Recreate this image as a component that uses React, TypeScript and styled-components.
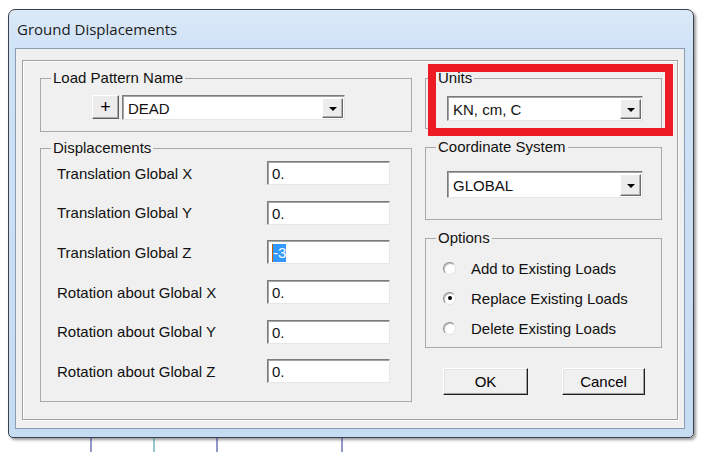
import React from 'react'
import styled, { createGlobalStyle } from 'styled-components'

const GlobalStyle = createGlobalStyle`
  html, body {
    margin: 0;
    padding: 0;
    background: #fff;
  }
  body {
    font-family: "Liberation Sans", Arial, sans-serif;
    font-size: 15px;
    color: #111;
  }
`

const Stage = styled.div`
  width: 706px;
  height: 452px;
  overflow: hidden;
`

const Window = styled.div`
  margin: 9px 0 0 8px;
  width: 686px;
  height: 429px;
  box-sizing: border-box;
  border: 1px solid #3a414c;
  border-radius: 7px 7px 5px 5px;
  background: linear-gradient(180deg, #dbe9f8 0%, #cfe2f6 40px, #c6dcf3 100%);
  box-shadow: 2px 2px 3px rgba(0, 0, 0, 0.4);
  display: flex;
  flex-direction: column;
  padding: 0 8px 8px 6px;
`

const TitleBar = styled.div`
  height: 38px;
  display: flex;
  align-items: center;
  padding-left: 2px;
  padding-bottom: 1px;
  box-sizing: border-box;
`

const Title = styled.span`
  font-family: "Open Sans", "Noto Sans", sans-serif;
  font-size: 15px;
  color: #1b1b1b;
`

const Client = styled.div`
  flex: 1;
  display: flex;
  border: 1px solid #8b9cb1;
  background: #f0f0f0;
  padding: 11px 6px 8px 6px;
`

const Panel = styled.div`
  flex: 1;
  display: flex;
  gap: 13px;
  border: 1px solid #a0a0a0;
  box-shadow: inset 1px 1px #fff, 1px 1px #fff;
  padding: 9px 15px 17px 17px;
`

const Column = styled.div<{ $width: number; $gap: number }>`
  width: ${p => p.$width}px;
  display: flex;
  flex-direction: column;
  gap: ${p => p.$gap}px;
`

const Group = styled.fieldset<{ $pad: string; $grow?: boolean }>`
  margin: 0;
  min-width: 0;
  border: 1px solid #a9a9a9;
  padding: ${p => p.$pad};
  ${p => (p.$grow ? 'flex: 1;' : '')}
`

const Legend = styled.legend`
  padding: 0 2px;
  font-size: 15px;
  line-height: 16px;
`

const PatternRow = styled.div`
  display: flex;
  align-items: flex-start;
  gap: 3px;
  padding-left: 41px;
`

const RaisedButton = styled.button`
  width: 27px;
  height: 24px;
  padding: 0;
  background: #ececec;
  border: 1px solid;
  border-color: #fff #5f5f5f #5f5f5f #fff;
  box-shadow: inset -1px -1px #a8a8a8;
  font-family: "Liberation Sans", Arial, sans-serif;
  font-size: 18px;
  line-height: 18px;
  color: #000;
`

const Combo = styled.div<{ $width: number; $height: number; $indent?: number }>`
  width: ${p => p.$width}px;
  height: ${p => p.$height}px;
  margin-left: ${p => p.$indent ?? 0}px;
  box-sizing: border-box;
  display: flex;
  align-items: stretch;
  background: #fff;
  border: 1px solid;
  border-color: #7c7c7c #e6e6e6 #e6e6e6 #7c7c7c;
  box-shadow: inset 1px 1px #a3a3a3;
  padding: 2px 1px 1px 5px;
`

const ComboText = styled.span`
  flex: 1;
  display: flex;
  align-items: center;
  font-size: 15px;
`

const DropButton = styled.span`
  width: 21px;
  box-sizing: border-box;
  display: flex;
  align-items: center;
  justify-content: center;
  background: #ececec;
  border: 1px solid;
  border-color: #fff #6a6a6a #6a6a6a #fff;
  box-shadow: inset -1px -1px #b0b0b0;
`

const Arrow = styled.span`
  width: 0;
  height: 0;
  border-left: 4px solid transparent;
  border-right: 4px solid transparent;
  border-top: 4px solid #000;
  margin-top: 1px;
`

const FieldGrid = styled.div`
  display: grid;
  grid-template-columns: 216px 123px;
  grid-auto-rows: 24px;
  row-gap: 15.7px;
  align-items: center;
`

const FieldLabel = styled.span`
  padding-left: 6px;
  font-size: 15px;
  white-space: nowrap;
`

const EditField = styled.div`
  height: 24px;
  box-sizing: border-box;
  display: flex;
  align-items: center;
  background: #fff;
  border: 1px solid;
  border-color: #7c7c7c #e6e6e6 #e6e6e6 #7c7c7c;
  box-shadow: inset 1px 1px #a3a3a3;
  padding: 1px 0 0 4px;
  font-size: 15px;
`

const Selected = styled.span`
  background: #3399ff;
  color: #fff;
  line-height: 18px;
  border-left: 1px solid #c06000;
`

const HighlightWrap = styled.div`
  position: relative;
`

const Highlight = styled.div`
  position: absolute;
  left: 3px;
  top: -6px;
  width: 245px;
  height: 72px;
  box-sizing: border-box;
  border: 8px solid #ed1c24;
  pointer-events: none;
`

const RadioList = styled.div`
  display: flex;
  flex-direction: column;
  gap: 10px;
`

const RadioRow = styled.label`
  display: flex;
  align-items: center;
  height: 20px;
  gap: 15px;
  padding-left: 7px;
  font-size: 15px;
`

const RadioDot = styled.span<{ $checked?: boolean }>`
  width: 13px;
  height: 13px;
  box-sizing: border-box;
  border-radius: 50%;
  border: 1px solid;
  border-color: #8c8c8c #e4e4e4 #e4e4e4 #8c8c8c;
  background: #fff;
  box-shadow: inset 1px 1px #c4c4c4;
  display: flex;
  align-items: center;
  justify-content: center;
  &::after {
    content: '';
    width: 4px;
    height: 4px;
    border-radius: 50%;
    background: ${p => (p.$checked ? '#000' : 'transparent')};
  }
`

const ButtonRow = styled.div`
  display: flex;
  gap: 34px;
  padding-left: 18px;
  margin-top: 10px;
`

const DialogButton = styled.button<{ $width: number }>`
  width: ${p => p.$width}px;
  height: 27px;
  padding: 0;
  background: #f0f0f0;
  border: 1px solid;
  border-color: #fff #1e1e1e #1e1e1e #fff;
  box-shadow: inset -1px -1px #a0a0a0, inset 1px 1px #e3e3e3;
  font-family: "Liberation Sans", Arial, sans-serif;
  font-size: 15px;
  color: #000;
`

const Backdrop = styled.svg`
  display: block;
`

const displacements = [
  { label: 'Translation Global X', value: '0.' },
  { label: 'Translation Global Y', value: '0.' },
  { label: 'Translation Global Z', value: '-3', selected: true },
  { label: 'Rotation about Global X', value: '0.' },
  { label: 'Rotation about Global Y', value: '0.' },
  { label: 'Rotation about Global Z', value: '0.' },
]

const options = [
  { label: 'Add to Existing Loads' },
  { label: 'Replace Existing Loads', checked: true },
  { label: 'Delete Existing Loads' },
]

const ComboBox = ({ text, width, height, indent }: { text: string; width: number; height: number; indent?: number }) => (
  <Combo $width={width} $height={height} $indent={indent}>
    <ComboText>{text}</ComboText>
    <DropButton><Arrow /></DropButton>
  </Combo>
)

export default function App() {
  return (
    <>
      <GlobalStyle />
      <Stage>
        <Window>
          <TitleBar>
            <Title>Ground Displacements</Title>
          </TitleBar>
          <Client>
            <Panel>
              <Column $width={372} $gap={8}>
                <Group $pad="9px 10px 11px">
                  <Legend>Load Pattern Name</Legend>
                  <PatternRow>
                    <RaisedButton>+</RaisedButton>
                    <ComboBox text="DEAD" width={223} height={25} />
                  </PatternRow>
                </Group>
                <Group $pad="5px 10px 0" $grow>
                  <Legend>Displacements</Legend>
                  <FieldGrid>
                    {displacements.map(d => (
                      <React.Fragment key={d.label}>
                        <FieldLabel>{d.label}</FieldLabel>
                        <EditField>
                          {d.selected ? <Selected>{d.value}</Selected> : d.value}
                        </EditField>
                      </React.Fragment>
                    ))}
                  </FieldGrid>
                </Group>
              </Column>
              <Column $width={237} $gap={10}>
                <HighlightWrap>
                  <Group $pad="10px 10px 7px">
                    <Legend>Units</Legend>
                    <ComboBox text="KN, cm, C" width={196} height={25} indent={11} />
                  </Group>
                  <Highlight />
                </HighlightWrap>
                <Group $pad="16px 10px 21px">
                  <Legend>Coordinate System</Legend>
                  <ComboBox text="GLOBAL" width={196} height={27} indent={11} />
                </Group>
                <Group $pad="12px 10px 9px">
                  <Legend>Options</Legend>
                  <RadioList>
                    {options.map(o => (
                      <RadioRow key={o.label}>
                        <RadioDot $checked={o.checked} />
                        {o.label}
                      </RadioRow>
                    ))}
                  </RadioList>
                </Group>
                <ButtonRow>
                  <DialogButton $width={85}>OK</DialogButton>
                  <DialogButton $width={83}>Cancel</DialogButton>
                </ButtonRow>
              </Column>
            </Panel>
          </Client>
        </Window>
        <Backdrop width="706" height="14" viewBox="0 0 706 14">
          <line x1="91" y1="0" x2="91" y2="14" stroke="#24338f" />
          <line x1="154" y1="0" x2="154" y2="14" stroke="#2f8f9c" />
          <line x1="217" y1="0" x2="217" y2="14" stroke="#24338f" />
          <line x1="342" y1="0" x2="342" y2="14" stroke="#24338f" />
        </Backdrop>
      </Stage>
    </>
  )
}
